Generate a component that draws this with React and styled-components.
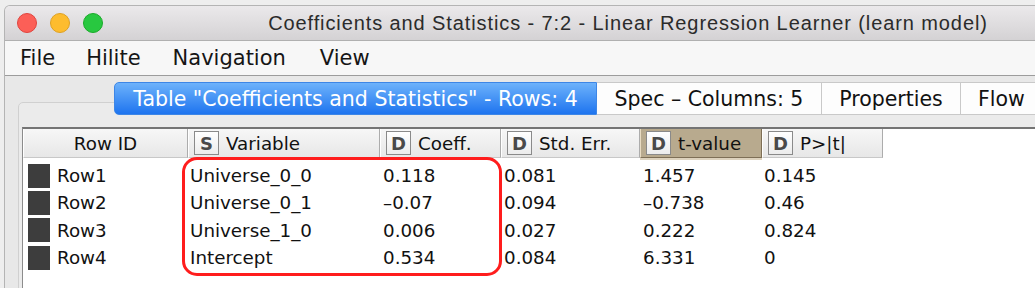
import React from 'react';
import styled, { createGlobalStyle } from 'styled-components';

const GlobalStyle = createGlobalStyle`
  html, body {
    margin: 0;
    padding: 0;
    background: #eeeeee;
    overflow: hidden;
  }
  body {
    font-family: 'DejaVu Sans', 'Verdana', sans-serif;
  }
`;

const Screen = styled.div`
  width: 1035px;
  height: 288px;
  overflow: hidden;
  padding: 5px 0 0 4px;
  box-sizing: border-box;
`;

const Window = styled.div`
  width: 1234px;
  height: 300px;
  border: 1px solid #b4b4b4;
  border-bottom: none;
  border-radius: 6px 6px 0 0;
  overflow: hidden;
  background: #e8e8e8;
`;

const TitleBar = styled.div`
  height: 34px;
  display: grid;
  grid-template-columns: 1fr auto 1fr;
  align-items: center;
  background: linear-gradient(#ebe9eb, #d4d2d4);
  border-bottom: 1px solid #b0b0b0;
  padding: 0 0 0 12px;
`;

const Lights = styled.div`
  display: flex;
  gap: 13px;
`;

const Light = styled.span`
  width: 20px;
  height: 20px;
  border-radius: 50%;
  background: ${p => p.color};
  border: 1px solid ${p => p.edge};
  box-sizing: border-box;
`;

const Title = styled.div`
  font-family: 'Liberation Sans', Arial, sans-serif;
  font-size: 20px;
  letter-spacing: 0.9px;
  color: #2b2b2b;
  white-space: nowrap;
`;

const MenuBar = styled.div`
  height: 34px;
  display: flex;
  align-items: center;
  background: #f7f7f7;
  border-bottom: 1px solid #9c9c9c;
  padding-left: 15px;
`;

const MenuItem = styled.span`
  font-size: 21px;
  color: #151515;
  margin-right: ${p => p.gap}px;
`;

const Body = styled.div`
  padding: 26px 0 0 13px;
`;

const Panel = styled.div`
  background: #ebebeb;
  border: 1px solid #d0d0d0;
  border-radius: 5px 0 0 0;
  padding-left: 3px;
  height: 220px;
`;

const TabRow = styled.div`
  display: flex;
  height: 33px;
  margin: -21px 0 0 92px;
`;

const Tab = styled.div`
  display: flex;
  align-items: center;
  box-sizing: border-box;
  width: ${p => p.w}px;
  flex: none;
  font-size: 20.5px;
  white-space: nowrap;
  color: ${p => (p.active ? '#ffffff' : '#111111')};
  background: ${p => (p.active ? 'linear-gradient(#6db2fb, #1e74ef)' : '#fdfdfd')};
  border: 1px solid ${p => (p.active ? '#3d86e6' : '#c9c9c9')};
  border-left: ${p => (p.active ? '1px solid #3d86e6' : 'none')};
  border-radius: ${p => (p.active ? '5px 0 0 5px' : '0')};
  padding-left: ${p => p.pad || 0}px;
  justify-content: ${p => (p.pad ? 'flex-start' : 'center')};
`;

const Table = styled.div`
  position: relative;
  margin-top: 12px;
  background: #ffffff;
  border-top: 2px solid #747474;
  border-left: 1px solid #8c8c8c;
  height: 200px;
`;

const Grid = styled.div`
  display: grid;
  grid-template-columns: 165px 192px 121px 139px 122px 121px 1fr;
`;

const Head = styled.div`
  height: 29px;
  box-sizing: border-box;
  display: flex;
  align-items: center;
  justify-content: ${p => (p.center ? 'center' : 'flex-start')};
  padding-left: ${p => (p.center ? 0 : 5)}px;
  font-size: 18.3px;
  color: #111;
  background: ${p => (p.active ? '#b8aa8e' : 'linear-gradient(#f7f7f7, #e7e7e7)')};
  border-right: 1px solid ${p => (p.active ? '#7e6f56' : '#acacac')};
  border-left: 1px solid ${p => (p.active ? '#e9dcc2' : '#ffffff')};
  border-bottom: 1px solid ${p => (p.active ? '#7e6f56' : '#c8c8c8')};
  box-shadow: ${p => (p.active ? '0 2px 0 #ddd2bd' : 'none')};
`;

const HeadBlank = styled.div`
  height: 29px;
  background: #ffffff;
`;

const TypeBox = styled.span`
  width: 25px;
  height: 24px;
  box-sizing: border-box;
  display: inline-flex;
  align-items: center;
  justify-content: center;
  border: 1px solid #8a8a8a;
  background: linear-gradient(#ffffff, #ececec);
  font-weight: bold;
  font-size: 18px;
  color: #4a4a4a;
  margin-right: 7px;
`;

const Rows = styled.div`
  padding-top: 4px;
`;

const Cell = styled.div`
  height: 27.3px;
  display: flex;
  align-items: center;
  padding-left: ${p => p.pad}px;
  font-size: 18.3px;
  color: #111;
  white-space: nowrap;
`;

const Marker = styled.span`
  width: 22px;
  height: 24px;
  background: #3d3d3d;
  margin-right: 7px;
  flex: none;
`;

const Highlight = styled.div`
  position: absolute;
  left: 159px;
  top: 28px;
  width: 320px;
  height: 119px;
  box-sizing: border-box;
  border: 3px solid #ff1d1d;
  border-radius: 15px;
  pointer-events: none;
`;

const columns = [
  { type: 'S', name: 'Variable' },
  { type: 'D', name: 'Coeff.' },
  { type: 'D', name: 'Std. Err.' },
  { type: 'D', name: 't-value', active: true },
  { type: 'D', name: 'P>|t|' },
];

const rows = [
  ['Row1', 'Universe_0_0', '0.118', '0.081', '1.457', '0.145'],
  ['Row2', 'Universe_0_1', '\u20130.07', '0.094', '\u20130.738', '0.46'],
  ['Row3', 'Universe_1_0', '0.006', '0.027', '0.222', '0.824'],
  ['Row4', 'Intercept', '0.534', '0.084', '6.331', '0'],
];

const pads = [2, 3, 3, 3, 2];

export default function App() {
  return (
    <>
      <GlobalStyle />
      <Screen>
        <Window>
          <TitleBar>
            <Lights>
              <Light color="#fc5f57" edge="#e0443e" />
              <Light color="#fdbc2e" edge="#dea123" />
              <Light color="#28c840" edge="#1aab29" />
            </Lights>
            <Title>Coefficients and Statistics - 7:2 - Linear Regression Learner (learn model)</Title>
            <span />
          </TitleBar>
          <MenuBar>
            <MenuItem gap={31}>File</MenuItem>
            <MenuItem gap={32}>Hilite</MenuItem>
            <MenuItem gap={34}>Navigation</MenuItem>
            <MenuItem gap={0}>View</MenuItem>
          </MenuBar>
          <Body>
            <Panel>
              <TabRow>
                <Tab active w={483}>Table "Coefficients and Statistics" - Rows: 4</Tab>
                <Tab w={225}>Spec – Columns: 5</Tab>
                <Tab w={139}>Properties</Tab>
                <Tab w={160} pad={17}>Flow</Tab>
              </TabRow>
              <Table>
                <Grid>
                  <Head center>Row ID</Head>
                  {columns.map(c => (
                    <Head key={c.name} active={c.active}>
                      <TypeBox>{c.type}</TypeBox>
                      {c.name}
                    </Head>
                  ))}
                  <HeadBlank />
                </Grid>
                <Rows>
                  {rows.map(r => (
                    <Grid key={r[0]}>
                      <Cell pad={5}>
                        <Marker />
                        {r[0]}
                      </Cell>
                      {r.slice(1).map((v, i) => (
                        <Cell key={i} pad={pads[i]}>
                          {v}
                        </Cell>
                      ))}
                      <Cell pad={0} />
                    </Grid>
                  ))}
                </Rows>
                <Highlight />
              </Table>
            </Panel>
          </Body>
        </Window>
      </Screen>
    </>
  );
}
